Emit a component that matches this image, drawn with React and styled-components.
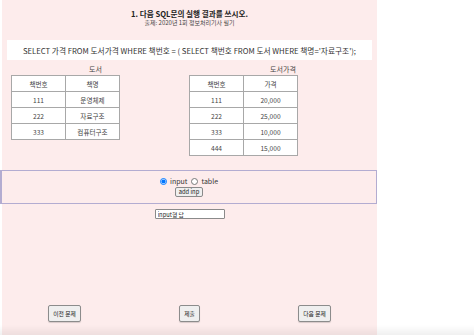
import styled, { createGlobalStyle } from 'styled-components';

const GlobalStyle = createGlobalStyle`
  html, body {
    margin: 0;
    padding: 0;
    background: #ffffff;
    font-family: "Noto Sans CJK KR", "Noto Sans", sans-serif;
  }
  body::after {
    content: '';
    position: fixed;
    left: 0;
    right: 0;
    bottom: 0;
    height: 10px;
    background: linear-gradient(to bottom, rgba(0, 0, 0, 0), rgba(0, 0, 0, 0.06));
    pointer-events: none;
  }
`;

const Page = styled.div`
  width: 375px;
  min-height: 335px;
  margin-left: 2px;
  background: #fdecec;
  box-sizing: border-box;
`;

const Header = styled.div`
  text-align: center;
  padding-top: 9px;
  color: #222;
`;

const Title = styled.div`
  font-size: 7.6px;
  font-weight: 700;
  line-height: 10px;
`;

const Sub = styled.div`
  font-size: 6px;
  line-height: 8px;
  color: #444;
`;

const QueryBox = styled.div`
  margin: 13px 5px 0;
  height: 20px;
  background: #ffffff;
  display: flex;
  align-items: center;
  justify-content: center;
  font-size: 7.7px;
  color: #333;
  white-space: nowrap;
`;

const Tables = styled.div`
  display: grid;
  grid-template-columns: 187px 188px;
  margin-top: 3px;
`;

const TableCol = styled.div`
  display: flex;
  flex-direction: column;
  align-items: flex-start;
`;

const Caption = styled.div`
  align-self: stretch;
  text-align: center;
  font-size: 7px;
  line-height: 12px;
  color: #444;
`;

const Table = styled.table`
  border-collapse: collapse;
  table-layout: fixed;
  width: 107px;
  background: #ffffff;
  margin-left: ${(p) => p.$offset}px;
`;

const Cell = styled.td`
  width: 53px;
  height: 15px;
  padding: 0;
  border: 1px solid #a8a8a8;
  text-align: center;
  font-size: 6.6px;
  color: #444;
`;

const ModeBox = styled.div`
  margin-top: 14px;
  margin-left: -2px;
  width: 377px;
  height: 34px;
  box-sizing: border-box;
  border: 1px solid #b3acd1;
  border-left-width: 2px;
  display: flex;
  flex-direction: column;
  align-items: center;
  padding-top: 5px;
`;

const RadioRow = styled.div`
  display: flex;
  align-items: center;
  font-size: 7px;
  line-height: 10px;
  color: #333;
`;

const Radio = styled.input`
  width: 7px;
  height: 7px;
  margin: 0 3px 0 ${(p) => (p.$first ? 0 : 4)}px;
`;

const SmallButton = styled.button`
  font-family: "Noto Sans CJK KR", sans-serif;
  font-size: 5.8px;
  line-height: 8px;
  padding: 0 3px;
  height: 10px;
  margin-top: 1px;
  background: #efefef;
  border: 1px solid #8a8a8a;
  border-radius: 2px;
  color: #222;
`;

const AnswerInput = styled.input`
  display: block;
  margin: 5px auto 0;
  width: 70px;
  height: 10px;
  box-sizing: border-box;
  padding: 0 2px;
  font-family: "Noto Sans CJK KR", sans-serif;
  font-size: 5.8px;
  color: #222;
  border: 1px solid #8a8a8a;
  border-radius: 1px;
  background: #ffffff;
`;

const Footer = styled.div`
  display: grid;
  grid-template-columns: repeat(3, 1fr);
  justify-items: center;
  margin-top: 86px;
`;

const NavButton = styled.button`
  font-family: "Noto Sans CJK KR", sans-serif;
  font-size: 5.8px;
  height: 17px;
  padding: 0 4px;
  background: #efefef;
  border: 1px solid #8c8c8c;
  border-radius: 2px;
  box-shadow: 0 1px 1px rgba(0, 0, 0, 0.15);
  color: #222;
`;

const books = [
  ['책번호', '책명'],
  ['111', '운영체제'],
  ['222', '자료구조'],
  ['333', '컴퓨터구조'],
];

const prices = [
  ['책번호', '가격'],
  ['111', '20,000'],
  ['222', '25,000'],
  ['333', '10,000'],
  ['444', '15,000'],
];

const DataTable = ({ caption, rows, offset }) => (
  <TableCol>
    <Caption>{caption}</Caption>
    <Table $offset={offset}>
      <tbody>
        {rows.map((row, i) => (
          <tr key={i}>
            {row.map((c, j) => (
              <Cell key={j}>{c}</Cell>
            ))}
          </tr>
        ))}
      </tbody>
    </Table>
  </TableCol>
);

const App = () => {
  return (
    <>
      <GlobalStyle />
      <Page>
        <Header>
          <Title>1. 다음 SQL문의 실행 결과를 쓰시오.</Title>
          <Sub>출제: 2020년 1회 정보처리기사 필기</Sub>
        </Header>
        <QueryBox>
          SELECT 가격 FROM 도서가격 WHERE 책번호 = ( SELECT 책번호 FROM 도서 WHERE 책명='자료구조');
        </QueryBox>
        <Tables>
          <DataTable caption="도서" rows={books} offset={9} />
          <DataTable caption="도서가격" rows={prices} offset={0} />
        </Tables>
        <ModeBox>
          <RadioRow>
            <Radio type="radio" name="mode" defaultChecked $first />
            input
            <Radio type="radio" name="mode" />
            table
          </RadioRow>
          <SmallButton>add inp</SmallButton>
        </ModeBox>
        <AnswerInput defaultValue="input형 답" />
        <Footer>
          <NavButton>이전 문제</NavButton>
          <NavButton>제출</NavButton>
          <NavButton>다음 문제</NavButton>
        </Footer>
      </Page>
    </>
  );
};

export default App;
